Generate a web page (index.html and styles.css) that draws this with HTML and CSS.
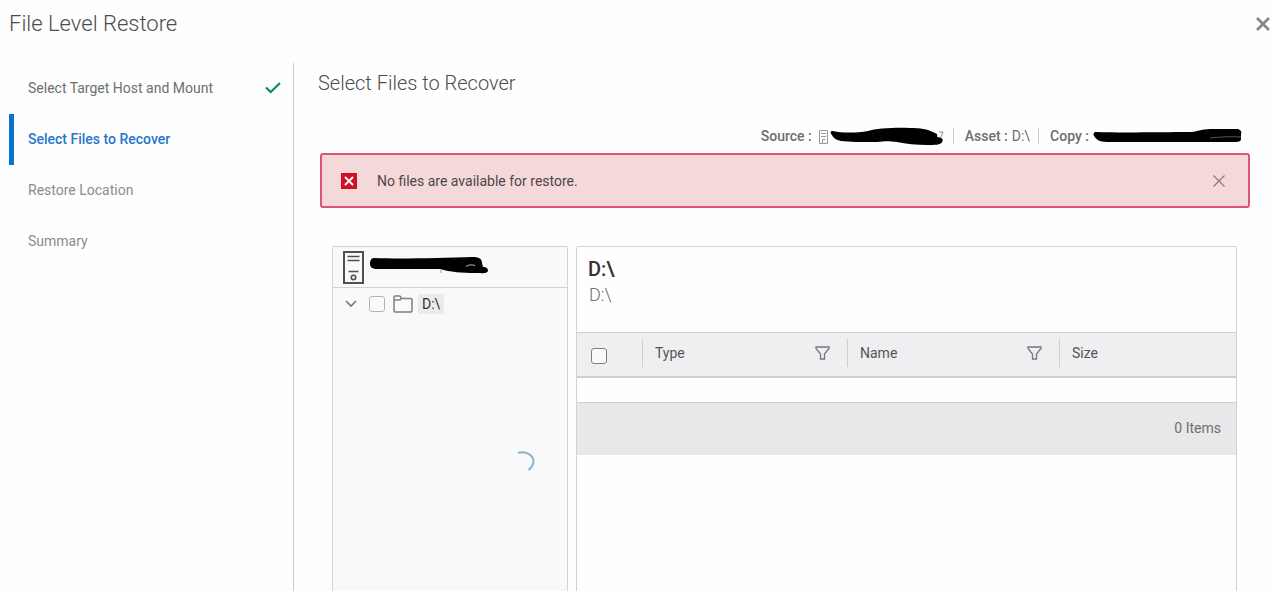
FILE: index.html
```html
<!DOCTYPE html>
<html lang="en">
<head>
<meta charset="utf-8">
<meta name="viewport" content="width=device-width, initial-scale=1">
<title>File Level Restore</title>
<link rel="stylesheet" href="styles.css">
</head>
<body>
<header class="topbar">
  <h1 class="topbar-title">File Level Restore</h1>
  <button class="icon-button" type="button" aria-label="Close">
    <svg width="16" height="16" viewBox="0 0 16 16"><path d="M2 2 14 14M14 2 2 14" stroke="#858585" stroke-width="2.600" fill="none"/></svg>
  </button>
</header>
<div class="wizard">
  <nav class="steps" aria-label="Steps">
    <ol class="step-list">
      <li class="step step-done">Select Target Host and Mount
        <svg width="16" height="12" viewBox="0 0 16 12"><path d="M1 5.5 5.7 10 15 1" stroke="#0b8f55" stroke-width="2.2" fill="none"/></svg>
      </li>
      <li class="step step-active" aria-current="step">Select Files to Recover</li>
      <li class="step">Restore Location</li>
      <li class="step">Summary</li>
    </ol>
  </nav>
  <main class="content">
    <h2 class="content-title">Select Files to Recover</h2>
    <div class="summary">
      <div class="summary-item"><b>Source :</b>
        <svg width="9" height="14" viewBox="0 0 9 14" fill="none" stroke="#999"><path d="M.5.5h8v13h-8zM2 3.500h5M2 6.500h5M3.500 13V9.500h3"/></svg>
        <svg class="redaction" width="115" height="18" viewBox="0 0 115 18"><path d="M3 4C12 6 26 6 38 4 50 0 88 0 98 3l7 3c2 0 3 3 2 4 5 0 7 3 5 5-1 3-8 3-14 3-12 0-22-1-31-3-8-1-12-1-20 0-15 0-28 0-36-1C6 13 3 11 2 8 0 6 0 4 3 4Z"/><path d="M109 5h4l-2 5" fill="none" stroke="#888"/></svg>
      </div>
      <div class="summary-item"><b>Asset :</b> D:\</div>
      <div class="summary-item"><b>Copy :</b>
        <svg class="redaction" width="149" height="14" viewBox="0 0 149 14"><path d="M3 3C30 4 70 3 98 3c6 0 9-3 20-3 10-1 22-1 27 0 3 1 4 3 3 5v5c0 3-4 3-8 3H14C6 13 3 10 1 7 0 4 1 3 3 3Z"/><path d="M117 9q18-2 31-1" fill="none" stroke="#555"/></svg>
      </div>
    </div>
    <div class="alert" role="alert">
      <svg width="16" height="16" viewBox="0 0 16 16"><path d="M0 0h16v16H0z" fill="#ce1126"/><path d="m4 4 8 8m0-8-8 8" stroke="#fff" stroke-width="1.800"/></svg>
      <span class="alert-text">No files are available for restore.</span>
      <button class="icon-button" type="button" aria-label="Dismiss">
        <svg width="12" height="12" viewBox="0 0 12 12"><path d="m.5.5 11 11m0-11-11 11" stroke="#8a797c" stroke-width="1.200"/></svg>
      </button>
    </div>
    <div class="browser">
      <section class="tree" aria-label="Folders">
        <div class="tree-host">
          <svg width="21" height="33" viewBox="0 0 21 33" fill="none" stroke="#505050"><path d="M1 1h19v31H1z" stroke-width="2"/><path d="M4.500 5.500h12M4.500 9.500h12M5.500 20.500h10" stroke-width="1.600"/><circle cx="10.500" cy="26.500" r="2.200" stroke-width="1.600"/></svg>
          <svg class="redaction" width="118" height="19" viewBox="0 0 118 19"><path d="M4 2C30 3 70 2 103 1c6 0 9 2 9 6l1 4c4 0 5 2 5 4-1 3-6 2-12 2-14 0-26-1-36-4H8C2 13 0 11 0 8c0-3 1-6 4-6Z"/><path d="M96 10.500c3-2 6-2 9-1" fill="none" stroke="#bbb"/><path d="M71 14v3" stroke="#999"/></svg>
        </div>
        <div class="tree-row">
          <button class="icon-button" type="button" aria-label="Collapse D:\">
            <svg width="12" height="8" viewBox="0 0 12 8"><path d="m1 1 5 5 5-5" stroke="#777" stroke-width="1.600" fill="none"/></svg>
          </button>
          <input class="check check-light" type="checkbox" id="drive">
          <svg width="20" height="18" viewBox="0 0 20 18" fill="none" stroke="#808080" stroke-width="1.500"><path d="M1 4.500V2q0-1 1-1h4.500q1 0 1.200 1L8 3.500h10q1 0 1 1V16q0 1-1 1H2q-1 0-1-1ZM1 5h6l1-1.500"/></svg>
          <label class="tree-label" for="drive">D:\</label>
        </div>
        <svg class="spinner" width="20" height="20" viewBox="0 0 20 20" role="img" aria-label="Loading"><path d="M3 1.800C11-.5 18 4 18.500 10" stroke="#8fb2c9" stroke-width="2" fill="none"/><path d="M18.500 10q0 5-5 9" stroke="#6ebcd2" stroke-width="2" fill="none"/></svg>
      </section>
      <section class="files" aria-label="Files">
        <div class="files-head">
          <h3 class="files-title">D:\</h3>
          <div class="files-path">D:\</div>
        </div>
        <table class="grid">
          <colgroup><col class="col-check"><col class="col-type"><col class="col-name"><col></colgroup>
          <thead>
            <tr>
              <th><div class="head-check"><input class="check" type="checkbox" aria-label="Select all"></div></th>
              <th><div class="head-cell">Type
                <button class="icon-button" type="button" aria-label="Filter by type"><svg width="15" height="14" viewBox="0 0 15 14"><path d="M1 1h13v1.500L9.500 8v5h-4V8L1 2.500Z" stroke="#77777e" stroke-width="1.300" fill="none"/></svg></button></div></th>
              <th><div class="head-cell">Name
                <button class="icon-button" type="button" aria-label="Filter by name"><svg width="15" height="14" viewBox="0 0 15 14"><path d="M1 1h13v1.500L9.500 8v5h-4V8L1 2.500Z" stroke="#77777e" stroke-width="1.300" fill="none"/></svg></button></div></th>
              <th><div class="head-cell">Size</div></th>
            </tr>
          </thead>
          <tbody><tr><td class="empty" colspan="4"></td></tr></tbody>
          <tfoot><tr><td class="count" colspan="4">0 Items</td></tr></tfoot>
        </table>
      </section>
    </div>
  </main>
</div>
</body>
</html>
```
FILE: styles.css
```css
* { box-sizing: border-box; }

body {
  margin: 0;
  height: 100vh;
  display: flex;
  flex-direction: column;
  overflow: hidden;
  background: #fefefe;
  color: #6e6e6e;
  font: 14px/20px Roboto, "Liberation Sans", sans-serif;
}

h1, h2, h3, ol { margin: 0; padding: 0; }
svg { display: block; flex: none; }

.icon-button {
  display: flex;
  padding: 0;
  border: 0;
  background: none;
}

.topbar {
  display: flex;
  justify-content: space-between;
  align-items: center;
  height: 47px;
  margin-bottom: 16px;
  padding: 0 4px 0 9px;
}

.topbar-title {
  font-size: 22px;
  line-height: 28px;
  font-weight: 300;
  color: #4c4c4c;
}

.wizard { flex: 1; display: flex; min-height: 0; }

.steps {
  flex: none;
  width: 294px;
  padding-left: 9px;
  border-right: 1px solid #ccc;
}

.step-list { list-style: none; }

.step {
  display: flex;
  align-items: center;
  justify-content: space-between;
  height: 51px;
  padding: 0 12px 2px 14px;
  border-left: 5px solid transparent;
  color: #8c8c8c;
}

.step-done { color: #6e6e6e; }
.step-active { border-left-color: #0672cb; color: #2676cc; font-weight: 500; }

.content {
  flex: 1;
  min-width: 0;
  display: flex;
  flex-direction: column;
  padding: 6px 25px 0 24px;
}

.content-title {
  font-size: 20px;
  line-height: 28px;
  font-weight: 300;
  color: #4c4c4c;
}

.summary {
  display: flex;
  justify-content: flex-end;
  margin-top: 29px;
  padding-right: 8px;
}

.summary-item {
  display: flex;
  align-items: center;
  gap: 4px;
  height: 20px;
}

.summary-item b { font-weight: 500; }

.summary-item + .summary-item {
  margin-left: 8px;
  padding-left: 12px;
  background: linear-gradient(#ccc, #ccc) left center / 1px 16px no-repeat;
}

.summary-item > svg:first-of-type:not(.redaction) { margin: 2px -2px 0 3px; }
.redaction { fill: #000; }

.alert {
  display: flex;
  align-items: center;
  height: 55px;
  margin: 7px 0 0 2px;
  padding: 0 23px 0 19px;
  border: 2px solid #dc5573;
  border-radius: 3px;
  background: #f5d9da;
  color: #4c4648;
}

.alert-text { flex: 1; margin-left: 20px; }

.browser {
  flex: 1;
  display: flex;
  gap: 8px;
  min-height: 0;
  margin: 38px 13px 0 14px;
}

.tree, .files {
  border: 1px solid #d2d1d5;
  border-bottom: 0;
  border-radius: 2px 2px 0 0;
}

.tree {
  position: relative;
  flex: none;
  width: 236px;
  background: #f9f8fb;
}

.tree-host {
  display: flex;
  gap: 6px;
  height: 41px;
  padding: 4px 10px;
  border-bottom: 1px solid #d2d1d5;
}

.tree-host .redaction { margin-top: 5px; }

.tree-row {
  display: flex;
  align-items: center;
  gap: 8px;
  height: 32px;
  padding-left: 12px;
}

.tree-row .icon-button { margin-right: 4px; }

.tree-label {
  margin-left: -3px;
  padding: 0 4px;
  background: #ebebed;
  color: #333;
}

.check {
  appearance: none;
  flex: none;
  width: 16px;
  height: 16px;
  margin: 0;
  border: 1px solid #7e7e82;
  border-radius: 3px;
  background: #fafafa;
}

.check-light { border-color: #b5b5b5; }

.spinner { position: absolute; top: 204px; right: 32px; }

.files { flex: 1; min-width: 0; background: #fefefe; }
.files-head { height: 85px; padding: 8px 11px; }
.files-title { font-size: 20px; line-height: 28px; font-weight: 500; color: #333; }
.files-path { padding-left: 1px; font-size: 18px; line-height: 24px; font-weight: 300; }

.grid {
  width: 100%;
  border-collapse: separate;
  border-spacing: 0;
  table-layout: fixed;
}

.col-check { width: 65px; }
.col-type { width: 205px; }
.col-name { width: 212px; }

.grid th {
  height: 46px;
  padding: 0 0 3px;
  border-top: 1px solid #cfced2;
  border-bottom: 2px solid #cfced2;
  background: #efeef0;
  color: #555;
  font-weight: 400;
  text-align: left;
}

.head-check { padding: 5px 0 0 14px; line-height: 0; }

.head-cell {
  display: flex;
  align-items: center;
  justify-content: space-between;
  height: 28px;
  padding: 0 17px 0 12px;
  border-left: 1px solid #cfced2;
}

.grid td { padding: 0; }
.grid .empty { height: 24px; }

.grid .count {
  height: 53px;
  padding: 0 15px 2px 0;
  border-top: 1px solid #cfced2;
  background: #e9e7ea;
  text-align: right;
}
```
